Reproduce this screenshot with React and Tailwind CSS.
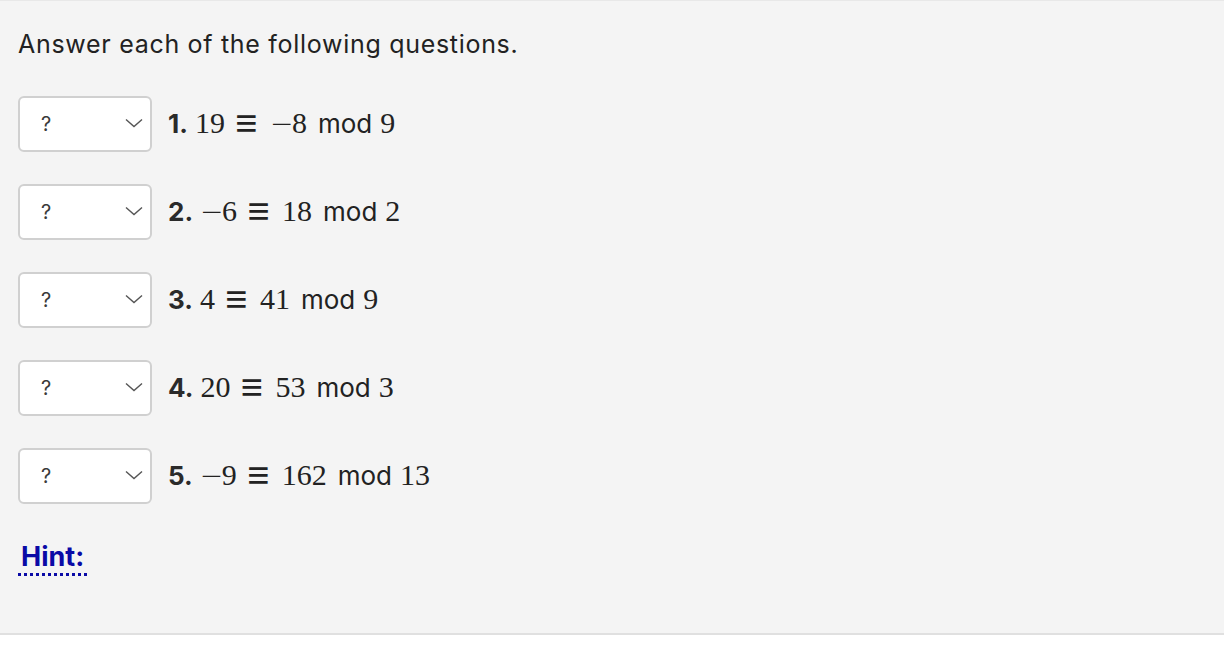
import React from "react";

const questions = [
  { n: "1.", lhs: "19", rhs: "\u22128", m: "9" },
  { n: "2.", lhs: "\u22126", rhs: "18", m: "2" },
  { n: "3.", lhs: "4", rhs: "41", m: "9" },
  { n: "4.", lhs: "20", rhs: "53", m: "3" },
  { n: "5.", lhs: "\u22129", rhs: "162", m: "13" },
];

const Num = ({ value }) => {
  // a leading minus gets the wide math minus
  const neg = value.startsWith("\u2212");
  const digits = neg ? value.slice(1) : value;
  return (
    <span>
      {neg && (
        <span className="inline-block w-[22px] font-['DejaVu_Sans',sans-serif] text-[28px] font-extralight">
          {"\u2212"}
        </span>
      )}
      <span className="font-['Liberation_Serif',serif] text-[30px]">{digits}</span>
    </span>
  );
};

const Picker = () => (
  <div className="flex h-[56px] w-[134px] shrink-0 items-center justify-between rounded-md border-2 border-[#d0d0d0] bg-white pl-[21px] pr-[7px]">
    <span className="text-[20px] text-[#3a3a3a]">?</span>
    <svg width="18" height="10" viewBox="0 0 18 10" className="mt-[-2px]">
      <path d="M1 1.5 L9 8.5 L17 1.5" fill="none" stroke="#555" strokeWidth="1.4" />
    </svg>
  </div>
);

const App = () => {
  return (
    <div className="min-h-[654px] bg-white font-['Inter',sans-serif]">
      <div className="h-[635px] border-t border-b-2 border-t-[#e8e8e8] border-b-[#e0e0e0] bg-[#f4f4f4] px-[18px] pt-[25px]">
        <p className="text-[25px] leading-[36px] tracking-[0.7px] text-[#222]">
          Answer each of the following questions.
        </p>

        <div className="mt-[34px] flex flex-col gap-8">
          {questions.map((q) => (
            <div key={q.n} className="flex items-center gap-4">
              <Picker />
              <div className="mb-[4px] flex items-baseline leading-[36px] text-[#222]">
                <span className="text-[26px] font-bold text-[#2a2a2a]">{q.n}</span>
                <span className="ml-[7px] whitespace-nowrap text-[26px]">
                  <Num value={q.lhs} />
                  <span className="ml-[8px] mr-[10px] inline-block w-[27px] translate-y-[3px] text-center font-['DejaVu_Sans',sans-serif] text-[38px] font-extralight">
                    {"\u2261"}
                  </span>
                  <Num value={q.rhs} />
                  <span className="ml-[11px] mr-[8px]">mod</span>
                  <Num value={q.m} />
                </span>
              </div>
            </div>
          ))}
        </div>

        <div className="mt-[35px] leading-[36px]">
          <span className="border-b-[3px] border-dotted border-[#0a0aa6] px-[3px] text-[27px] font-bold text-[#0a0aa6]">
            Hint:
          </span>
        </div>
      </div>
    </div>
  );
};

export default App;
